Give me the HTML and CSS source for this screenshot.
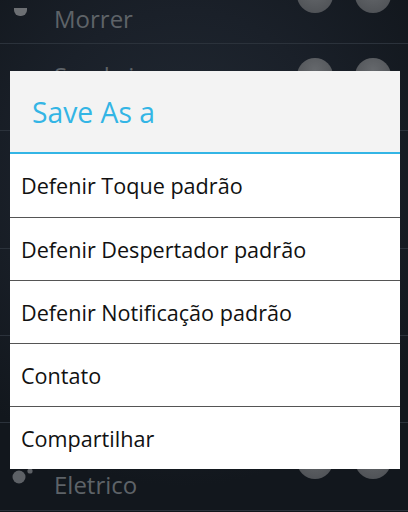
FILE: index.html
```html
<!DOCTYPE html>
<html lang="pt">
<head>
<meta charset="utf-8">
<title>Save As a</title>
<link rel="stylesheet" href="styles.css">
</head>
<body>
<div class="screen">
  <ul class="bg-list">
    <li class="row row-1">
      <span class="icon icon-cup"></span>
      <span class="name">Morrer</span>
      <span class="dots"><span class="dot"></span><span class="dot"></span></span>
    </li>
    <li class="row row-2">
      <span class="icon"></span>
      <span class="name">Sombrio</span>
      <span class="dots"><span class="dot"></span><span class="dot"></span></span>
    </li>
    <li class="row row-3">
      <span class="icon"></span>
      <span class="dots"><span class="dot"></span><span class="dot"></span></span>
    </li>
    <li class="row row-4">
      <span class="icon"></span>
      <span class="dots"><span class="dot"></span><span class="dot"></span></span>
    </li>
    <li class="row row-5">
      <span class="icon"></span>
      <span class="dots"><span class="dot"></span><span class="dot"></span></span>
    </li>
    <li class="row row-6">
      <svg class="icon icon-note" width="24" height="16" viewBox="0 0 24 16"><circle cx="7" cy="9" r="6.5" fill="#5d6166"/><circle cx="18" cy="3" r="2.6" fill="#5d6166"/></svg>
      <span class="name">Eletrico</span>
      <span class="dots"><span class="dot"></span><span class="dot"></span></span>
    </li>
  </ul>

  <div class="dialog">
    <div class="dialog-title">Save As a</div>
    <ul class="dialog-list">
      <li class="item">Defenir Toque padrão</li>
      <li class="item">Defenir Despertador padrão</li>
      <li class="item">Defenir Notificação padrão</li>
      <li class="item">Contato</li>
      <li class="item">Compartilhar</li>
    </ul>
  </div>
</div>
</body>
</html>
```

FILE: styles.css
```css
* { box-sizing: border-box; }
html, body { margin: 0; padding: 0; }
body {
  width: 408px;
  height: 512px;
  overflow: hidden;
  font-family: "Open Sans", "DejaVu Sans", sans-serif;
  background: #171c24;
}
.screen {
  position: relative;
  width: 408px;
  height: 512px;
  overflow: hidden;
  background: radial-gradient(ellipse 70% 60% at 45% 35%, #222a34 0%, #1a2029 55%, #12171d 100%);
}
.bg-list {
  list-style: none;
  margin: 0;
  padding: 0;
}
.row {
  display: flex;
  align-items: flex-start;
  border-bottom: 1px solid #2b323b;
  color: #5e6368;
  font-size: 24px;
  line-height: 24px;
}
.icon {
  display: block;
  width: 40px;
  margin-left: 14px;
  flex: none;
}
.icon-cup {
  width: 13px;
  height: 8px;
  margin-top: 8px;
  margin-right: 27px;
  background: #6c6f73;
  border-radius: 0 0 6px 6px;
}
.icon-note {
  width: 24px;
  height: 16px;
  margin-left: 12px;
  margin-right: 18px;
  margin-top: 45px;
}
.name {
  flex: 1;
}
.dots {
  display: flex;
  gap: 22px;
  margin-left: auto;
  margin-right: 17px;
}
.dot {
  width: 36px;
  height: 36px;
  border-radius: 50%;
  background: radial-gradient(circle at 50% 35%, #66696d 0%, #55585c 60%, #4a4d52 100%);
}
.row-1 { height: 44px; }
.row-1 .name { margin-top: 7px; }
.row-1 .dots { margin-top: -23px; }
.row-2 { height: 87px; }
.row-2 .name { margin-top: 20px; }
.row-2 .dots { margin-top: 14px; }
.row-3 { height: 118px; }
.row-3 .dots { margin-top: 40px; }
.row-4, .row-5 { height: 87px; }
.row-4 .dots, .row-5 .dots { margin-top: 20px; }
.row-6 { height: 88px; }
.row-6 .name { margin-top: 50px; }
.row-6 .dots { margin-top: 20px; }

.dialog {
  position: absolute;
  top: 71px;
  left: 10px;
  width: 390px;
  background: #ffffff;
}
.dialog-title {
  height: 83px;
  padding-left: 22px;
  padding-top: 21px;
  background: #f3f3f3;
  border-bottom: 2px solid #33b5e5;
  color: #33b5e5;
  font-size: 28.3px;
  line-height: 40px;
}
.dialog-list {
  list-style: none;
  margin: 0;
  padding: 0;
}
.item {
  height: 63px;
  display: flex;
  align-items: center;
  padding-left: 11px;
  border-top: 1px solid #555555;
  color: #111111;
  font-size: 21.6px;
}
.item:first-child {
  border-top: none;
}
```
